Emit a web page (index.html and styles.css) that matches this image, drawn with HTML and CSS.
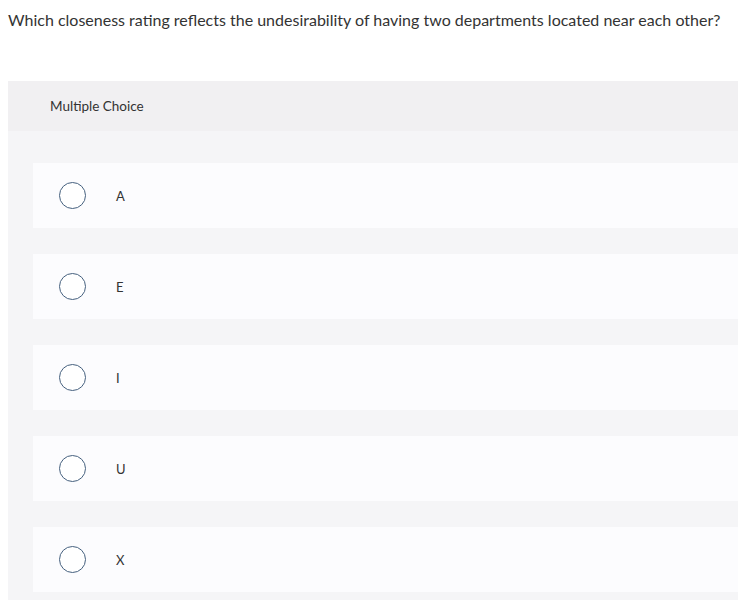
FILE: index.html
```html
<!DOCTYPE html>
<html>
<head>
<meta charset="utf-8">
<link rel="stylesheet" href="styles.css">
</head>
<body>
<p class="question">Which closeness rating reflects the undesirability of having two departments located near each other?</p>
<div class="panel">
  <div class="panel-head">Multiple Choice</div>
  <div class="choices">
    <div class="choice"><span class="radio"></span><span class="label">A</span></div>
    <div class="choice"><span class="radio"></span><span class="label">E</span></div>
    <div class="choice"><span class="radio"></span><span class="label">I</span></div>
    <div class="choice"><span class="radio"></span><span class="label">U</span></div>
    <div class="choice"><span class="radio"></span><span class="label">X</span></div>
  </div>
</div>
</body>
</html>
```
FILE: styles.css
```css
html, body {
  margin: 0;
  padding: 0;
  background: #ffffff;
}
body {
  font-family: Lato, "Open Sans", sans-serif;
  color: #333333;
  overflow: hidden;
}
.question {
  margin: 0;
  padding: 10px 0 0 8px;
  font-size: 16px;
  line-height: 20px;
  height: 81px;
  box-sizing: border-box;
  color: #333333;
  white-space: nowrap;
}
.panel {
  margin-left: 8px;
  background: #f5f5f7;
  height: 519px;
}
.panel-head {
  background: #f1f0f2;
  height: 50px;
  display: flex;
  align-items: center;
  padding-left: 42px;
  font-size: 13.5px;
  color: #333;
}
.choices {
  padding: 32px 0 0 25px;
  display: flex;
  flex-direction: column;
  gap: 26px;
}
.choice {
  height: 65px;
  background: #fcfcfe;
  display: flex;
  align-items: center;
  padding-left: 26px;
}
.radio {
  width: 25px;
  height: 25px;
  border: 1.5px solid #45607e;
  border-radius: 50%;
  background: #fff;
  flex: none;
}
.label {
  margin-left: 30px;
  font-size: 13px;
  color: #333;
}
```
